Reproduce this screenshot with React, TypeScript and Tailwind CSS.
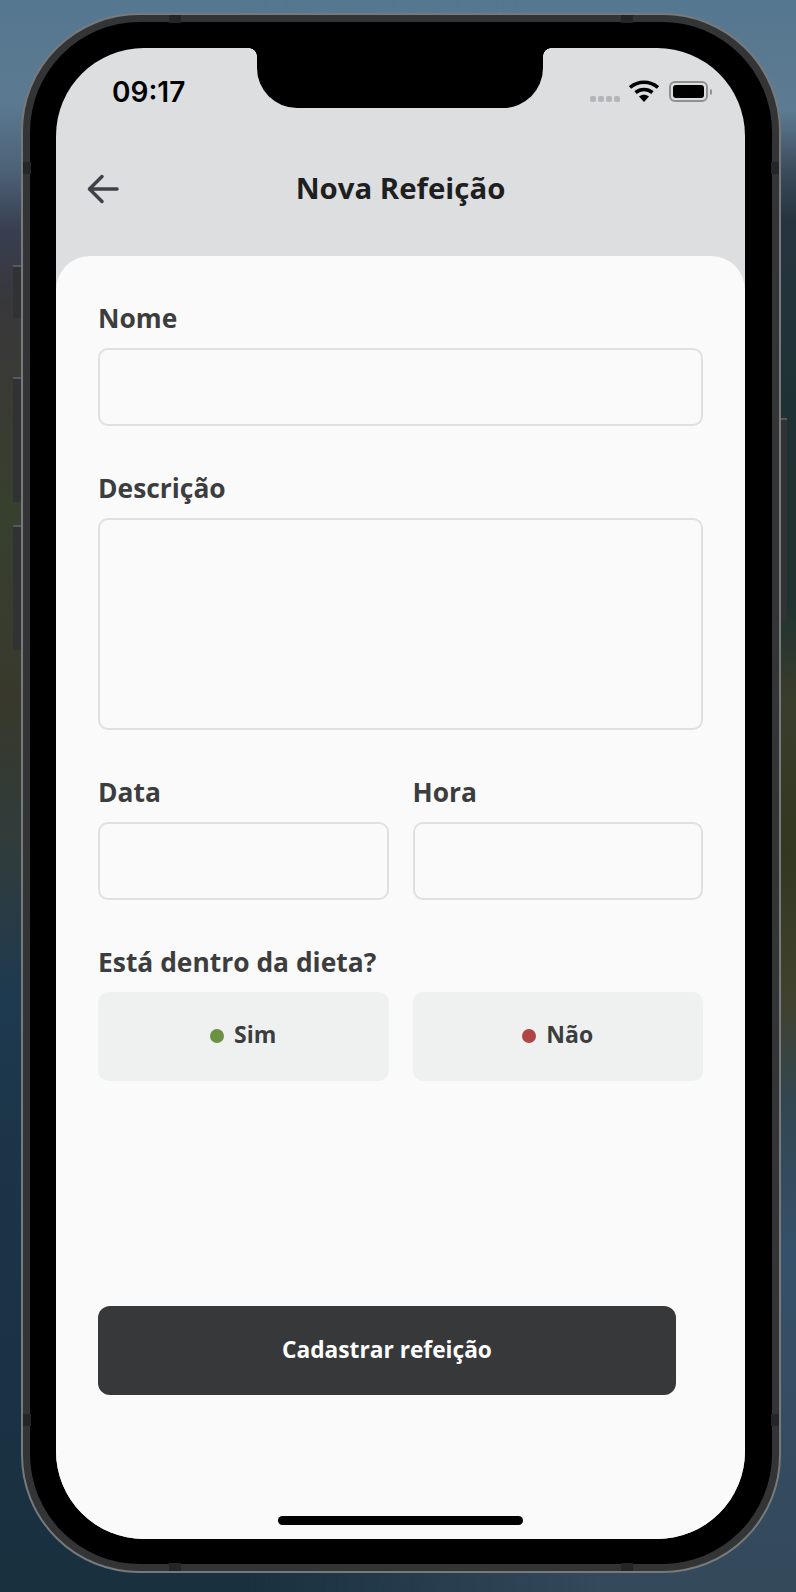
const labelCls = "block h-[30px] font-['Open_Sans',sans-serif] text-[26.4px] leading-[30px] font-bold text-[#3c3d3f]";
const inputCls = "block w-full rounded-[10px] border-2 border-[#dfe0e1] bg-[#fafafa]";

function Field({ label, height = "h-[78px]" }: { label: string; height?: string }) {
  return (
    <div className="flex-1">
      <label className={labelCls}>{label}</label>
      <div className={`mt-[15px] ${inputCls} ${height}`} />
    </div>
  );
}

function Toggle({ label, dot }: { label: string; dot: string }) {
  return (
    <div className="flex h-[89px] flex-1 items-center justify-center gap-[10px] rounded-[10px] bg-[#eff1f0] pb-[4px]">
      <span className={`mt-[3px] h-[14px] w-[14px] rounded-full ${dot}`} />
      <span className="font-['Open_Sans',sans-serif] text-[23px] font-bold text-[#3c3d3f]">{label}</span>
    </div>
  );
}

function StatusBar() {
  return (
    <div className="flex h-[64px] items-start justify-between pt-[26px] pl-[56px] pr-[33px]">
      <span className="font-['Inter',sans-serif] text-[28px] leading-[36px] font-semibold text-black">09:17</span>
      <div className="-mt-[10px] flex items-start">
        <div className="mt-[32px] flex gap-[2px]">
          <span className="h-[6px] w-[6px] rounded-[2px] bg-[#b4b5b7]" />
          <span className="h-[6px] w-[6px] rounded-[2px] bg-[#b4b5b7]" />
          <span className="h-[6px] w-[6px] rounded-[2px] bg-[#b4b5b7]" />
          <span className="h-[6px] w-[6px] rounded-[2px] bg-[#b4b5b7]" />
        </div>
        <svg className="mt-[16px] ml-[9px]" width="30" height="22" viewBox="0 0 30 22">
          <path d="M1 7.5C9 .5 21 .5 29 7.5" fill="none" stroke="#000" strokeWidth="3.6" />
          <path d="M6.5 12.5C11.5 8.5 18.5 8.5 23.5 12.5" fill="none" stroke="#000" strokeWidth="3.6" />
          <path d="M10 16.5C13 14 17 14 20 16.5L15 22Z" fill="#000" />
        </svg>
        <div className="mt-[17px] ml-[10px] flex items-center">
          <div className="h-[21px] w-[39px] rounded-[6px] border-2 border-[#8f9092] p-[2px]">
            <div className="h-full w-full rounded-[3px] bg-black" />
          </div>
          <span className="ml-[2px] h-[6px] w-[2px] rounded-r-[2px] bg-[#8f9092]" />
        </div>
      </div>
    </div>
  );
}

export default function App() {
  return (
    <div className="relative h-[1592px] w-[796px] overflow-hidden bg-[linear-gradient(180deg,#55778f_0px,#5b7a92_100px,#4d6277_170px,#383f50_230px,#38383c_300px,#3a3b33_400px,#37402e_520px,#38392c_700px,#303c3c_850px,#1e3a50_1000px,#1b3448_1150px,#19303f_1592px)] pt-[13px] pl-[21px]">
      {/* wallpaper is different on the right side */}
      <div className="absolute inset-0 bg-[linear-gradient(180deg,#55778f_0px,#5d7b92_110px,#3c4c5c_170px,#26343f_220px,#1e3234_400px,#1e3230_600px,#3a3d2c_700px,#33371f_850px,#40412e_1000px,#324650_1100px,#35506a_1250px,#34495a_1592px)] [mask-image:linear-gradient(90deg,transparent_30%,black_75%)]" />

      {/* side buttons */}
      <div className="absolute top-[265px] left-[13px] h-[53px] w-[8px] border-t-2 border-[#55585c] bg-[#303234]" />
      <div className="absolute top-[377px] left-[13px] h-[125px] w-[8px] border-t-2 border-[#55585c] bg-[#303234]" />
      <div className="absolute top-[525px] left-[13px] h-[125px] w-[8px] border-t-2 border-[#55585c] bg-[#303234]" />
      <div className="absolute top-[418px] left-[781px] h-[204px] w-[6px] border-t-2 border-[#55585c] bg-[#303234]" />

      {/* phone frame */}
      <div className="relative h-[1560px] w-[760px] rounded-[118px] border-2 border-[#77797b] bg-[#333435] p-[7px]">
        <div className="absolute top-0 left-[146px] h-[8px] w-[12px] bg-[#242526]" />
        <div className="absolute top-0 right-[146px] h-[8px] w-[12px] bg-[#242526]" />
        <div className="absolute bottom-0 left-[146px] h-[8px] w-[12px] bg-[#242526]" />
        <div className="absolute bottom-0 right-[146px] h-[8px] w-[12px] bg-[#242526]" />
        <div className="absolute top-[147px] left-0 h-[12px] w-[8px] bg-[#242526]" />
        <div className="absolute top-[147px] right-0 h-[12px] w-[8px] bg-[#242526]" />
        <div className="absolute bottom-[145px] left-0 h-[12px] w-[8px] bg-[#242526]" />
        <div className="absolute bottom-[145px] right-0 h-[12px] w-[8px] bg-[#242526]" />

        <div className="h-full w-full rounded-[110px] bg-black pt-[26px] pr-[27px] pb-[25px] pl-[26px]">
          <div className="relative flex h-[1491px] w-[689px] flex-col overflow-hidden rounded-[88px] bg-[#dddee0]">
            {/* notch */}
            <div className="absolute top-0 left-[201px] h-[60px] w-[286px] rounded-b-[40px] bg-black" />
            <div className="absolute top-0 left-[193px] h-[8px] w-[8px] bg-[radial-gradient(circle_at_0_100%,transparent_7.5px,black_8px)]" />
            <div className="absolute top-0 left-[487px] h-[8px] w-[8px] bg-[radial-gradient(circle_at_100%_100%,transparent_7.5px,black_8px)]" />

            <StatusBar />

            <header className="relative flex h-[144px] items-center justify-center pt-[8px]">
              <svg className="absolute top-[62px] left-[31px]" width="32" height="30" viewBox="0 0 32 30" fill="none" stroke="#3e4145" strokeWidth="3.5" strokeLinecap="round" strokeLinejoin="round">
                <path d="M30 15H3" />
                <path d="M15 2.5L2.5 15L15 27.5" />
              </svg>
              <h1 className="font-['Open_Sans',sans-serif] text-[29.4px] leading-[36px] font-bold text-[#1d1f20]">Nova Refeição</h1>
            </header>

            <main className="flex-1 rounded-t-[34px] bg-[#fafafa] pt-[47px] pr-[42px] pl-[42px]">
              <Field label="Nome" />
              <div className="mt-[47px]">
                <Field label="Descrição" height="h-[212px]" />
              </div>
              <div className="mt-[47px] flex gap-[24px]">
                <Field label="Data" />
                <Field label="Hora" />
              </div>
              <div className="mt-[47px]">
                <label className={labelCls}>Está dentro da dieta?</label>
                <div className="mt-[15px] flex gap-[24px]">
                  <Toggle label="Sim" dot="bg-[#6b9142]" />
                  <Toggle label="Não" dot="bg-[#b24347]" />
                </div>
              </div>
              <button className="mt-[225px] flex h-[89px] w-[578px] items-center justify-center rounded-[12px] bg-[#37383a] font-['Open_Sans',sans-serif] text-[22.7px] font-bold text-white">
                Cadastrar refeição
              </button>
              <div className="mx-auto mt-[121px] h-[9px] w-[245px] rounded-full bg-black" />
            </main>
          </div>
        </div>
      </div>
    </div>
  );
}
